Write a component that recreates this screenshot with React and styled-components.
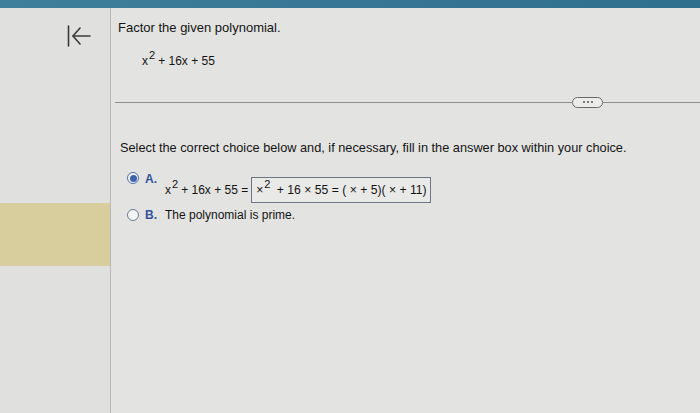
import React from 'react';
import styled, { createGlobalStyle } from 'styled-components';

const GlobalStyle = createGlobalStyle`
  html, body {
    margin: 0;
    padding: 0;
    background: #e3e3e1;
  }
  body {
    font-family: 'Liberation Sans', Arial, sans-serif;
    color: #141414;
  }
`;

const Page = styled.div`
  width: 700px;
  height: 413px;
  display: flex;
  flex-direction: column;
  overflow: hidden;
`;

const TopBar = styled.div`
  height: 8px;
  flex: none;
  background: linear-gradient(90deg, #3f7f9c, #2f6f8e);
`;

const Body = styled.div`
  flex: 1;
  display: flex;
`;

const Sidebar = styled.div`
  width: 110px;
  flex: none;
  background: #e0e0de;
  border-right: 1px solid #b9b9b7;
  display: flex;
  flex-direction: column;
`;

const BackButton = styled.div`
  height: 22px;
  margin: 17px 0 0 67px;
  display: flex;
  align-items: center;
`;

const Highlight = styled.div`
  margin-top: 156px;
  height: 63px;
  background: #d8cd9c;
`;

const Main = styled.div`
  flex: 1;
  display: flex;
  flex-direction: column;
  padding-top: 12px;
`;

const Title = styled.p`
  margin: 0 0 0 7px;
  font-size: 13px;
  line-height: 16px;
`;

const Expr = styled.div`
  margin: ${(p) => p.$top || 0}px 0 0 ${(p) => p.$left || 0}px;
  font-size: 12px;
  line-height: 16px;
  white-space: nowrap;
`;

const Sup = styled.span`
  font-size: 11px;
  position: relative;
  top: -6px;
  margin: 0 3px 0 1px;
`;

const DividerRow = styled.div`
  margin-top: 27px;
  height: 12px;
  display: flex;
  align-items: center;
  padding-left: 4px;
`;

const Line = styled.div`
  height: 1px;
  background: #8f8f8f;
  flex: ${(p) => (p.$grow ? 1 : 'none')};
  width: ${(p) => (p.$grow ? 'auto' : '457px')};
`;

const Pill = styled.div`
  width: 29px;
  height: 9px;
  border: 1px solid #6a6a6a;
  border-radius: 6px;
  display: flex;
  align-items: center;
  justify-content: center;
  gap: 2px;
  background: #ececea;
`;

const Dot = styled.span`
  width: 2px;
  height: 2px;
  border-radius: 50%;
  background: #555;
`;

const Instruction = styled.p`
  margin: 32px 0 0 9px;
  font-size: 12.75px;
  line-height: 16px;
`;

const Options = styled.div`
  margin: 21px 0 0 16px;
  display: flex;
  flex-direction: column;
  gap: 1px;
`;

const Option = styled.div`
  display: flex;
  align-items: ${(p) => (p.$tall ? 'flex-start' : 'center')};
  height: ${(p) => (p.$tall ? 27 : 20)}px;
`;

const Radio = styled.span`
  width: 12px;
  height: 12px;
  box-sizing: border-box;
  border-radius: 50%;
  border: 1px solid ${(p) => (p.$checked ? '#4a6fa8' : '#6a7c98')};
  background: #f4f4f4;
  display: flex;
  align-items: center;
  justify-content: center;
  flex: none;
  margin-top: ${(p) => (p.$checked ? '-5px' : '0')};
  &::after {
    content: '';
    width: 7px;
    height: 7px;
    border-radius: 50%;
    background: ${(p) => (p.$checked ? '#3d63ad' : 'transparent')};
  }
`;

const Letter = styled.span`
  margin-left: 6px;
  width: 20px;
  font-size: 12px;
  line-height: 12px;
  font-weight: bold;
  color: #33549a;
  margin-top: ${(p) => (p.$raised ? '-4px' : '0')};
`;

const AnswerLine = styled.div`
  display: flex;
  align-items: center;
`;

const AnswerBox = styled.div`
  margin-left: 3px;
  height: 24px;
  padding: 0 3px 0 4px;
  border: 1px solid #6e7585;
  background: #e9e9e7;
  display: flex;
  align-items: center;
  font-size: 12.2px;
  white-space: nowrap;
`;

const Text = styled.span`
  font-size: 12px;
`;

const BackArrow = () => (
  <svg width="24" height="22" viewBox="0 0 24 22" fill="none" stroke="#3b3b3b" strokeWidth="1.6" strokeLinecap="round" strokeLinejoin="round">
    <line x1="1.5" y1="1" x2="1.5" y2="21" />
    <line x1="6" y1="11" x2="23" y2="11" />
    <polyline points="13,3 6,11 13,19" />
  </svg>
);

export default function App() {
  return (
    <Page>
      <GlobalStyle />
      <TopBar />
      <Body>
        <Sidebar>
          <BackButton>
            <BackArrow />
          </BackButton>
          <Highlight />
        </Sidebar>
        <Main>
          <Title>Factor the given polynomial.</Title>
          <Expr $top={17} $left={31}>
            x<Sup>2</Sup>+ 16x + 55
          </Expr>
          <DividerRow>
            <Line />
            <Pill>
              <Dot />
              <Dot />
              <Dot />
            </Pill>
            <Line $grow />
          </DividerRow>
          <Instruction>
            Select the correct choice below and, if necessary, fill in the answer box within your choice.
          </Instruction>
          <Options>
            <Option $tall>
              <Radio $checked />
              <Letter $raised>A.</Letter>
              <AnswerLine>
                <Expr>
                  x<Sup>2</Sup>+ 16x + 55 =
                </Expr>
                <AnswerBox>
                  <span>
                    ×<Sup>2</Sup>&nbsp;+ 16 × 55 = ( × + 5)( × + 11)
                  </span>
                </AnswerBox>
              </AnswerLine>
            </Option>
            <Option>
              <Radio />
              <Letter>B.</Letter>
              <Text>The polynomial is prime.</Text>
            </Option>
          </Options>
        </Main>
      </Body>
    </Page>
  );
}
